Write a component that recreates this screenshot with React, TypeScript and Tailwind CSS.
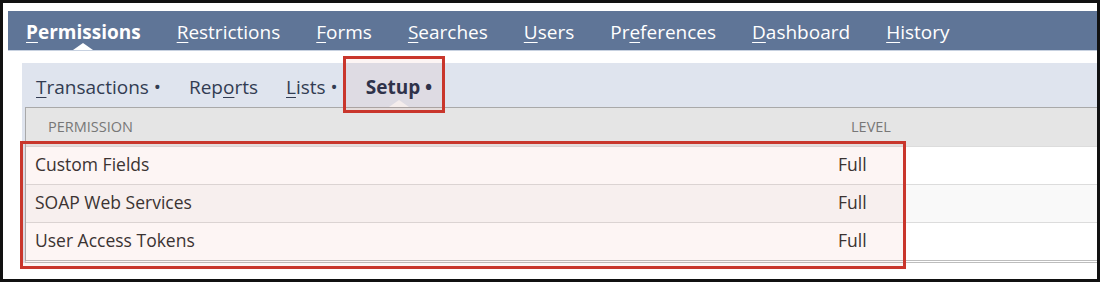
import React from "react";

const font = { fontFamily: '"Open Sans", "Liberation Sans", sans-serif' };

function Key({ children }: { children: React.ReactNode }) {
  return <span className="underline underline-offset-[3px] decoration-1">{children}</span>;
}

function NavTab({ children, active }: { children: React.ReactNode; active?: boolean }) {
  return (
    <div className={"relative flex items-center h-full px-[18px] pt-[3px] text-white " + (active ? "font-bold" : "")}>
      <span>{children}</span>
      {active && (
        <span className="absolute bottom-0 left-1/2 -translate-x-1/2 w-0 h-0 border-l-[10px] border-r-[10px] border-b-[7px] border-l-transparent border-r-transparent border-b-white" />
      )}
    </div>
  );
}

function SubTab({ children, active }: { children: React.ReactNode; active?: boolean }) {
  return (
    <div className={"relative flex items-center h-full px-[14px] pt-[4px] " + (active ? "font-bold text-[#26324c]" : "text-[#323c52]")}>
      <span>{children}</span>
      {active && (
        <span className="absolute bottom-0 left-1/2 -translate-x-1/2 w-0 h-0 border-l-[10px] border-r-[10px] border-b-[7px] border-l-transparent border-r-transparent border-b-[#f7f7f7]" />
      )}
    </div>
  );
}

const rows = [
  { name: "Custom Fields", level: "Full", bg: "bg-white" },
  { name: "SOAP Web Services", level: "Full", bg: "bg-[#f9f9f9]" },
  { name: "User Access Tokens", level: "Full", bg: "bg-white" },
];

export default function App() {
  return (
    <div className="w-[1100px] h-[282px] bg-[#111] p-[3px]" style={font}>
      <div className="relative w-full h-full bg-white overflow-hidden">
        {/* main tabs */}
        <div className="ml-[5px] mt-[8px] h-[39px] bg-[#5f7597] flex items-center text-[19px] border-b border-[#c7d1e0] box-content">
          <NavTab active>
            <Key>P</Key>ermissions
          </NavTab>
          <NavTab>
            <Key>R</Key>estrictions
          </NavTab>
          <NavTab>
            <Key>F</Key>orms
          </NavTab>
          <NavTab>
            <Key>S</Key>earches
          </NavTab>
          <NavTab>
            <Key>U</Key>sers
          </NavTab>
          <NavTab>
            Pr<Key>e</Key>ferences
          </NavTab>
          <NavTab>
            <Key>D</Key>ashboard
          </NavTab>
          <NavTab>
            <Key>H</Key>istory
          </NavTab>
        </div>

        {/* sub tabs + table */}
        <div className="ml-[19px] mt-[12px] bg-[#dfe4ee]">
          <div className="h-[44px] flex items-center text-[19px]">
            <SubTab>
              <Key>T</Key>ransactions •
            </SubTab>
            <SubTab>
              Rep<Key>o</Key>rts
            </SubTab>
            <SubTab>
              <Key>L</Key>ists •
            </SubTab>
            <SubTab active>Setup •</SubTab>
          </div>
          <div className="pl-[3px]">
            <div className="border-l border-t border-[#a9a9a9] bg-white border-b-[3px] border-b-[#bdbdbd] border-double">
              <div className="h-[38px] bg-[#e5e5e5] flex items-center text-[14.5px] text-[#777]">
                <div className="w-[803px] pl-[22px]">PERMISSION</div>
                <div className="pl-[22px]">LEVEL</div>
              </div>
              {rows.map((r) => (
                <div key={r.name} className={"h-[38px] flex items-center pb-[3px] text-[17.5px] text-[#333] border-t border-[#dcdcdc] " + r.bg}>
                  <div className="w-[803px] pl-[9px]">{r.name}</div>
                  <div className="pl-[9px]">{r.level}</div>
                </div>
              ))}
            </div>
          </div>
        </div>

        {/* annotation boxes */}
        <div className="absolute left-[340px] top-[53px] w-[102px] h-[57px] border-[3px] border-[#c9362c] bg-[rgba(225,60,45,0.05)]" />
        <div className="absolute left-[17px] top-[138px] w-[886px] h-[128px] border-[3px] border-[#c9362c] bg-[rgba(225,60,45,0.05)]" />
      </div>
    </div>
  );
}
